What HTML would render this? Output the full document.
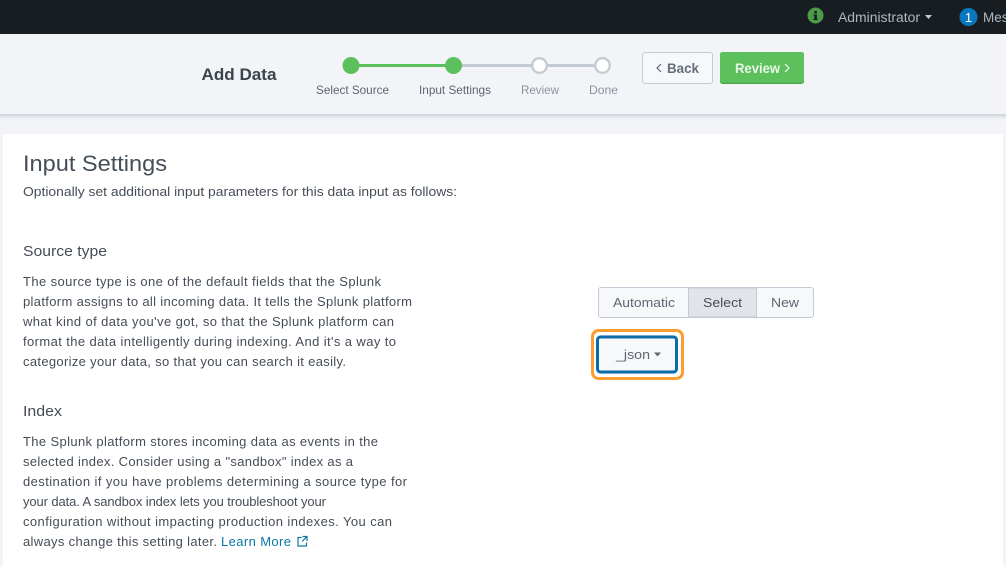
<!DOCTYPE html>
<html><head><meta charset="utf-8"><style>
html,body{margin:0;padding:0;width:1006px;height:567px;overflow:hidden;background:#fff}
svg{display:block}
text{font-family:"Liberation Sans",sans-serif;fill:#454d57}
</style></head><body>
<svg width="1006" height="567" viewBox="0 0 1006 567" xmlns="http://www.w3.org/2000/svg">
<defs>
<linearGradient id="sh" x1="0" y1="0" x2="0" y2="1"><stop offset="0" stop-color="#ccd3db"/><stop offset="1" stop-color="#f2f4f7"/></linearGradient>
<filter id="gl" x="-20%" y="-20%" width="140%" height="140%"><feGaussianBlur stdDeviation="0.500"/></filter>
</defs>
<rect width="1006" height="567" fill="#f2f4f7"/>
<rect width="1006" height="34" fill="#171d21"/>
<rect y="114" width="1006" height="5" fill="url(#sh)"/>
<rect x="3" y="134" width="1000" height="433" fill="#fff"/>

<!-- top bar -->
<circle cx="815.500" cy="15.500" r="8" fill="#4d9b47"/>
<rect x="814.300" y="14.500" width="2.600" height="5.200" fill="#171d21"/><rect x="814.300" y="11" width="2.600" height="2.400" fill="#171d21"/>
<rect x="813.300" y="14.500" width="2" height="1" fill="#171d21"/><rect x="813.300" y="18.900" width="4.600" height="1" fill="#171d21"/>
<text x="838" y="22" font-size="13.500" textLength="82" lengthAdjust="spacingAndGlyphs" style="fill:#aeb8c4">Administrator</text>
<path d="M925 15h7l-3.500 4z" fill="#c3cbd4"/>
<circle cx="968.500" cy="17" r="9" fill="#0877c0"/>
<text x="968.500" y="22" font-size="13" text-anchor="middle" style="fill:#fff">1</text>
<text x="983" y="22" font-size="13.500" style="fill:#aeb8c4">Messages</text>

<!-- header -->
<text x="201.500" y="80" font-size="17" font-weight="bold" textLength="75" lengthAdjust="spacingAndGlyphs" style="fill:#3c444d">Add Data</text>
<rect x="351" y="64" width="102" height="3" fill="#5cc05c"/>
<rect x="453" y="64" width="149" height="3" fill="#c3cbd4"/>
<circle cx="351" cy="65.500" r="8.500" fill="#5cc05c"/>
<circle cx="453.500" cy="65.500" r="8.500" fill="#5cc05c"/>
<circle cx="539.500" cy="65.500" r="7.300" fill="#fff" stroke="#c3cbd4" stroke-width="2.400"/>
<circle cx="602.500" cy="65.500" r="7.300" fill="#fff" stroke="#c3cbd4" stroke-width="2.400"/>
<text x="316" y="94" font-size="12" textLength="73" lengthAdjust="spacingAndGlyphs" style="fill:#5c6773">Select Source</text>
<text x="419" y="94" font-size="12" textLength="72" lengthAdjust="spacingAndGlyphs" style="fill:#5c6773">Input Settings</text>
<text x="521" y="94" font-size="12" textLength="38" lengthAdjust="spacingAndGlyphs" style="fill:#8a94a0">Review</text>
<text x="589" y="94" font-size="12" textLength="29" lengthAdjust="spacingAndGlyphs" style="fill:#8a94a0">Done</text>

<!-- Back / Review -->
<rect x="642.500" y="52.500" width="70" height="31" rx="2.500" fill="#f7f8fa" stroke="#c3cbd4"/>
<path d="M661 64l-4 4 4 4" fill="none" stroke="#5c6773" stroke-width="1.200"/>
<text x="667" y="73" font-size="13.500" font-weight="bold" textLength="32" lengthAdjust="spacingAndGlyphs" style="fill:#646f7b">Back</text>
<rect x="720" y="52" width="84" height="32" rx="2.500" fill="#4fa84f"/>
<rect x="720" y="52" width="84" height="30.500" rx="2.500" fill="#5cc05c"/>
<text x="735" y="73" font-size="13.500" font-weight="bold" textLength="45" lengthAdjust="spacingAndGlyphs" style="fill:#eaf8ea">Review</text>
<path d="M785 64l4 4-4 4" fill="none" stroke="#f2fbf2" stroke-width="1.200"/>

<!-- main text -->
<text x="23" y="171" font-size="22" textLength="144" lengthAdjust="spacingAndGlyphs">Input Settings</text>
<text x="23" y="196" font-size="13" textLength="434" lengthAdjust="spacingAndGlyphs">Optionally set additional input parameters for this data input as follows:</text>
<text x="23" y="256" font-size="15" textLength="84" lengthAdjust="spacingAndGlyphs">Source type</text>
<text x="23" y="286" font-size="13" textLength="358" lengthAdjust="spacing">The source type is one of the default fields that the Splunk</text>
<text x="23" y="306" font-size="13" textLength="389" lengthAdjust="spacing">platform assigns to all incoming data. It tells the Splunk platform</text>
<text x="23" y="326" font-size="13" textLength="371" lengthAdjust="spacing">what kind of data you've got, so that the Splunk platform can</text>
<text x="23" y="346" font-size="13" textLength="373" lengthAdjust="spacing">format the data intelligently during indexing. And it's a way to</text>
<text x="23" y="366" font-size="13" textLength="323" lengthAdjust="spacing">categorize your data, so that you can search it easily.</text>
<text x="23" y="416" font-size="15" textLength="39" lengthAdjust="spacingAndGlyphs">Index</text>
<text x="23" y="446" font-size="13" textLength="355" lengthAdjust="spacing">The Splunk platform stores incoming data as events in the</text>
<text x="23" y="466" font-size="13" textLength="330" lengthAdjust="spacing">selected index. Consider using a "sandbox" index as a</text>
<text x="23" y="486" font-size="13" textLength="384" lengthAdjust="spacing">destination if you have problems determining a source type for</text>
<text x="23" y="506" font-size="13" textLength="303" lengthAdjust="spacing">your data. A sandbox index lets you troubleshoot your</text>
<text x="23" y="526" font-size="13" textLength="369" lengthAdjust="spacing">configuration without impacting production indexes. You can</text>
<text x="23" y="546" font-size="13" textLength="194" lengthAdjust="spacing">always change this setting later.</text>
<text x="221" y="546" font-size="13" textLength="70" lengthAdjust="spacing" style="fill:#0877a6">Learn More</text>
<path d="M301.500 537.500h-3.500v8.500h8.500v-3.500M302.500 536.500h4.500v4.500M307 536.500l-5 5" fill="none" stroke="#0877a6" stroke-width="1.200"/>

<!-- segmented -->
<rect x="598.500" y="287.500" width="215" height="30" rx="2.500" fill="#f7f8fa" stroke="#c3cbd4"/>
<rect x="688.500" y="288" width="68" height="29" fill="#e1e5ea" stroke="#c3cbd4"/>
<text x="613" y="307" font-size="13" textLength="62" lengthAdjust="spacingAndGlyphs" style="fill:#5c6773">Automatic</text>
<text x="703" y="307" font-size="13" textLength="39" lengthAdjust="spacingAndGlyphs">Select</text>
<text x="771" y="307" font-size="13" textLength="28" lengthAdjust="spacingAndGlyphs" style="fill:#5c6773">New</text>

<!-- dropdown -->
<rect x="592.500" y="330.500" width="90" height="48" rx="6" fill="#fff" stroke="#fb9d2f" stroke-width="3"/>
<rect x="596.500" y="335.500" width="81" height="38" rx="4" fill="#9ecbe6" filter="url(#gl)"/>
<rect x="597.500" y="337" width="79" height="35" rx="3" fill="#f7f8fa" stroke="#0a6ca8" stroke-width="3"/>
<text x="616" y="359" font-size="13" textLength="34" lengthAdjust="spacingAndGlyphs" style="fill:#5c6773">_json</text>
<path d="M654 352.500h7l-3.500 4z" fill="#5c6773"/>
</svg>
</body></html>
